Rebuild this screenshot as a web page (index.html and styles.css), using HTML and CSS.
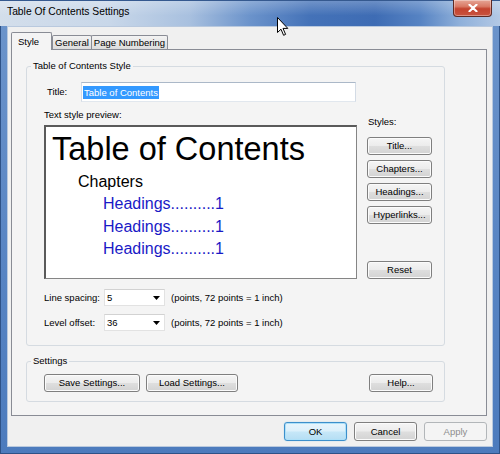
FILE: index.html
```html
<!DOCTYPE html>
<html>
<head>
<meta charset="utf-8">
<link rel="stylesheet" href="styles.css">
</head>
<body>
<div class="window">
  <div class="titlebar">
    <span class="title">Table Of Contents Settings</span>
    <div class="close">
      <svg width="10" height="8" viewBox="0 0 10 8"><path d="M1.5 0.8 L8.5 7.2 M8.5 0.8 L1.5 7.2" stroke="#fff" stroke-width="2.2" stroke-linecap="round"/></svg>
    </div>
  </div>
  <div class="client">
    <div class="tabs">
      <div class="tab tab-style active">Style</div>
      <div class="tab tab-general">General</div>
      <div class="tab tab-pn">Page Numbering</div>
    </div>
    <div class="panel">
      <fieldset class="group">
        <legend>Table of Contents Style</legend>
        <div class="g1-body">
          <div class="title-row">
            <label class="title-label">Title:</label>
            <div class="textbox"><span class="sel">Table of Contents</span></div>
          </div>
          <div class="preview-grid">
            <div class="preview-col">
              <div class="lbl">Text style preview:</div>
              <div class="preview">
                <div class="pv-title">Table of Contents</div>
                <div class="pv-chap">Chapters</div>
                <div class="pv-head">Headings..........1</div>
                <div class="pv-head">Headings..........1</div>
                <div class="pv-head">Headings..........1</div>
              </div>
            </div>
            <div class="styles-col">
              <div class="lbl styles-lbl">Styles:</div>
              <button class="btn sbtn first">Title...</button>
              <button class="btn sbtn">Chapters...</button>
              <button class="btn sbtn">Headings...</button>
              <button class="btn sbtn">Hyperlinks...</button>
              <button class="btn sbtn reset">Reset</button>
            </div>
          </div>
          <div class="combo-row first-row">
            <span class="clabel">Line spacing:</span>
            <div class="combo"><span>5</span><svg width="7" height="4" viewBox="0 0 7 4"><path d="M0 0 H7 L3.5 4 Z" fill="#000"/></svg></div>
            <span class="hint">(points, 72 points = 1 inch)</span>
          </div>
          <div class="combo-row">
            <span class="clabel">Level offset:</span>
            <div class="combo"><span>36</span><svg width="7" height="4" viewBox="0 0 7 4"><path d="M0 0 H7 L3.5 4 Z" fill="#000"/></svg></div>
            <span class="hint">(points, 72 points = 1 inch)</span>
          </div>
        </div>
      </fieldset>
      <fieldset class="group g2">
        <legend>Settings</legend>
        <div class="g2-body">
          <button class="btn save">Save Settings...</button>
          <button class="btn load">Load Settings...</button>
          <button class="btn help">Help...</button>
        </div>
      </fieldset>
    </div>
    <div class="footer">
      <button class="btn fbtn ok">OK</button>
      <button class="btn fbtn">Cancel</button>
      <button class="btn fbtn disabled">Apply</button>
    </div>
  </div>
  <svg class="cursor" width="12" height="19" viewBox="0 0 12 19">
    <path d="M0.5 0.5 L0.5 15.5 L4 12.2 L6.6 18.3 L8.6 17.4 L6 11.4 L10.8 11.4 Z" fill="#fff" stroke="#000" stroke-width="1" stroke-linejoin="miter"/>
  </svg>
</div>
</body>
</html>
```
FILE: styles.css
```css
* { box-sizing: border-box; }
html, body { margin: 0; padding: 0; }
body { width: 500px; height: 454px; overflow: hidden; background: #fff; }

.window {
  position: relative;
  width: 500px;
  height: 454px;
  display: flex;
  flex-direction: column;
  background: linear-gradient(180deg, #6d95cb 0%, #5784c3 60%, #4c7bbd 100%);
  box-shadow: inset 0 0 0 1px #2e5287;
}

.titlebar {
  height: 26px;
  display: flex;
  align-items: flex-start;
  background:
    linear-gradient(180deg, rgba(255,255,255,0.25) 0%, rgba(255,255,255,0) 60%),
    linear-gradient(90deg, #d3deeb 0%, #c8d7e9 22%, #a8c0df 38%, #6b93cb 50%, #4472b8 62%, #3e6cb4 75%, #5683c3 84%, #8fb0da 92%, #b3c9e5 100%);
  box-shadow: inset 0 1px 0 #35598f;
}

.title {
  font-family: "Liberation Sans", Arial, sans-serif;
  font-size: 10.3px;
  line-height: 24px;
  padding-left: 7px;
  color: #000;
}

.close {
  margin-left: auto;
  margin-right: 8px;
  width: 39px;
  height: 17px;
  border: 1px solid #5e2a24;
  border-top: none;
  border-radius: 0 0 4px 4px;
  background: linear-gradient(180deg, #e6a596 0%, #d97a66 40%, #c4432f 55%, #c85440 100%);
  box-shadow: inset 0 0 0 1px rgba(255,255,255,0.35);
  display: flex;
  align-items: center;
  justify-content: center;
}

.client {
  flex: 1;
  margin: 0 7px 7px;
  background: #f0f0f0;
  border: 1px solid #b9c9de;
  padding: 5px 5px 5px 3px;
  display: flex;
  flex-direction: column;
  font-family: "Liberation Sans", Arial, sans-serif;
  font-size: 9.5px;
  color: #000;
}

.tabs {
  display: flex;
  align-items: flex-end;
  height: 17px;
}

.tab {
  height: 14px;
  border: 1px solid #898c95;
  border-bottom: none;
  border-radius: 2px 2px 0 0;
  background: linear-gradient(180deg, #f3f3f3 0%, #e8e8e8 50%, #dcdcdc 100%);
  line-height: 13px;
  text-align: center;
  white-space: nowrap;
}
.tab-style { width: 41px; }
.tab-general { width: 40px; margin-left: 0; }
.tab-pn { width: 77px; margin-left: -1px; }

.tab.active {
  position: relative;
  z-index: 1;
  height: 18px;
  margin-bottom: -1px;
  background: #f4f4f4;
  line-height: 17px;
  text-align: left;
  padding-left: 6px;
}

.panel {
  height: 367px;
  border: 1px solid #898c95;
  background: #f4f4f4;
  padding: 9px 0 13px 14px;
}

.group {
  margin: 0;
  padding: 0;
  width: 419px;
  min-width: 0;
  border: 1px solid #d5dbe1;
  border-radius: 3px;
}
.group legend {
  margin-left: 4px;
  padding: 0 2px;
  line-height: 14px;
  font-size: 9.5px;
}
.g2 { margin-top: 8px; }

.g1-body { padding: 9px 12px 14px 17px; }

.title-row {
  display: flex;
  align-items: center;
  height: 20px;
}
.title-label {
  width: 37px;
  padding-left: 3px;
  line-height: 14px;
}
.textbox {
  width: 275px;
  height: 20px;
  background: #fff;
  border: 1px solid #b7c4d3;
  border-color: #abb8c8 #d3dbe5 #e1e7ee #d3dbe5;
  padding: 0 1px;
  display: flex;
  align-items: center;
}
.sel {
  background: #3399ff;
  color: #fff;
  line-height: 13px;
  padding: 0 1px 0 1px;
}

.preview-grid {
  display: grid;
  grid-template-columns: 313px 65px;
  column-gap: 10px;
  margin-top: 6px;
}
.lbl { line-height: 14px; }

.preview {
  margin-top: 3px;
  height: 154px;
  background: #fff;
  border: 1px solid #858585;
  border-top: 2px solid #5a5a5a;
  border-left: 2px solid #5a5a5a;
  padding: 2px 0 0 6px;
  font-family: "Liberation Sans", Arial, sans-serif;
  overflow: hidden;
  white-space: nowrap;
}
.pv-title { font-size: 32.5px; line-height: 40px; color: #000; }
.pv-chap { font-size: 16px; line-height: 22.3px; margin-top: 2px; padding-left: 26px; color: #000; }
.pv-head { font-size: 16px; line-height: 22.3px; padding-left: 51px; color: #1a1ac6; }

.styles-col {
  display: flex;
  flex-direction: column;
}
.styles-lbl { margin-top: 7px; padding-left: 1px; }

.btn {
  font-family: inherit;
  font-size: 9.5px;
  color: #000;
  height: 18px;
  padding: 0;
  line-height: 16px;
  border: 1px solid #7f7f7f;
  border-radius: 3px;
  background: linear-gradient(180deg, #f5f5f5 0%, #ececec 48%, #dedede 52%, #d3d3d3 100%);
  box-shadow: inset 0 0 0 1px #fbfbfb;
  white-space: nowrap;
}
.sbtn { margin-top: 5px; width: 65px; }
.sbtn.first { margin-top: 8px; }
.sbtn.reset { margin-top: auto; }

.combo-row {
  display: flex;
  align-items: center;
  height: 17px;
  margin-top: 8px;
}
.combo-row.first-row { margin-top: 10px; }
.clabel { width: 60px; white-space: nowrap; }
.combo {
  width: 61px;
  height: 17px;
  background: #fff;
  border: 1px solid #e2e2e2;
  border-top-color: #d2d2d2;
  display: flex;
  align-items: center;
  justify-content: space-between;
  padding: 0 4px 0 2px;
}
.hint { margin-left: 6px; white-space: nowrap; }

.g2-body {
  display: flex;
  padding: 6px 11px 9px 17px;
}
.save { width: 96px; }
.load { width: 92px; margin-left: 6px; }
.help { width: 64px; margin-left: auto; }

.footer {
  display: flex;
  justify-content: flex-end;
  gap: 7px;
  margin-top: 6px;
}
.fbtn { width: 63px; height: 19px; }
.fbtn.ok {
  border-color: #3c8fcb;
  background: linear-gradient(180deg, #e8f5fc 0%, #dbf0fb 48%, #c6e7f8 52%, #b5def4 100%);
  box-shadow: inset 0 0 0 1px #aee0f8, 0 0 1px #73c0ec;
}
.fbtn.disabled {
  border-color: #b2b6b9;
  background: #f4f4f4;
  box-shadow: none;
  color: #8d8d8d;
}

.cursor {
  position: absolute;
  left: 277px;
  top: 17px;
}
```
